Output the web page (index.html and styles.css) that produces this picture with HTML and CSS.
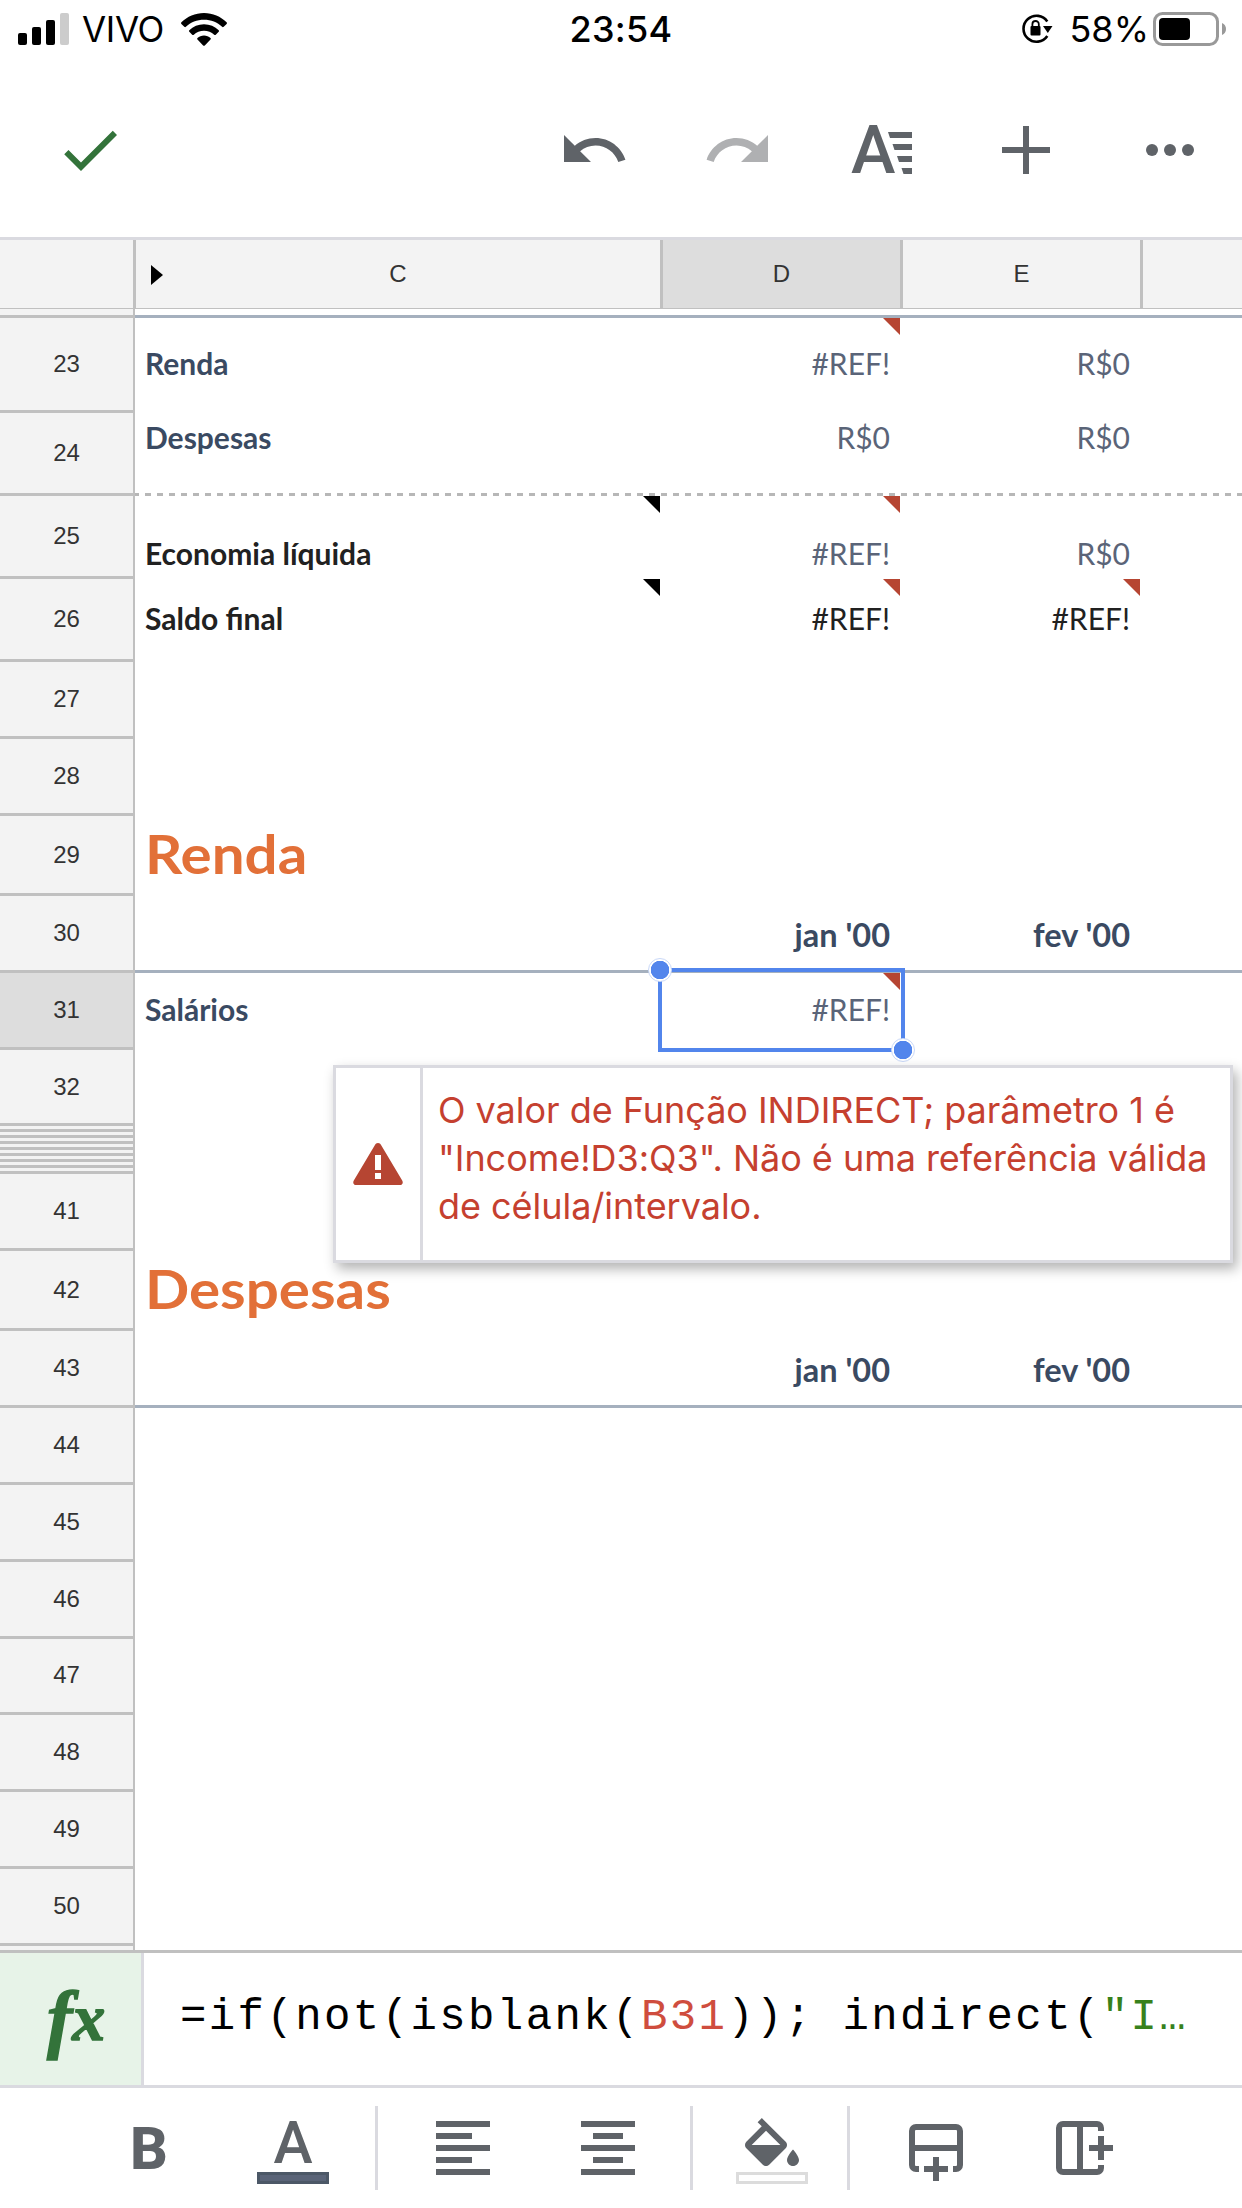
FILE: index.html
```html
<!DOCTYPE html>
<html lang="pt-BR">
<head>
  <meta charset="UTF-8">
  <meta name="viewport" content="width=device-width, initial-scale=1.0">
  <title>Planilha</title>
  <link rel="stylesheet" href="styles.css">
</head>
<body>
  <div class="app">
    <div class="status-bar">
      <div class="status-left">
        <svg class="signal" viewBox="0 0 51 32">
          <rect x="0" y="20" width="9" height="12" rx="2"/>
          <rect x="14" y="14" width="9" height="18" rx="2"/>
          <rect x="28" y="7" width="9" height="25" rx="2"/>
          <rect x="42" y="0" width="9" height="32" rx="2" fill="#ccc"/>
        </svg>
        <span class="carrier">VIVO</span>
        <svg class="wifi" viewBox="0 0 46 33">
          <path d="M23 0C14.200 0 6.200 3.600 .4 9.300c-.5.500-.5 1.100 0 1.600l2.900 2.900c.5.500 1.100.5 1.600 0C9.600 9.200 16 6.700 23 6.700s13.400 2.500 18.100 7.100c.5.500 1.100.5 1.600 0l2.900-2.900c.5-.5.5-1.100 0-1.600C39.800 3.600 31.800 0 23 0z"/>
          <path d="M23 11.300c-5.700 0-10.900 2.200-14.700 5.900-.5.500-.5 1.100 0 1.600l2.900 2.900c.5.500 1.100.5 1.600 0 2.700-2.500 6.300-3.900 10.200-3.900s7.500 1.400 10.200 3.900c.5.500 1.100.5 1.600 0l2.900-2.900c.5-.5.500-1.100 0-1.600-3.800-3.700-9-5.900-14.700-5.900z"/>
          <path d="M23 22.500c-2.500 0-4.800.9-6.500 2.400-.5.500-.5 1.100 0 1.500l5.600 6c.5.500 1.200.5 1.700 0l5.700-6c.5-.5.4-1.100 0-1.500-1.700-1.500-4-2.400-6.500-2.400z"/>
        </svg>
      </div>
      <span class="clock">23:54</span>
      <div class="status-right">
        <svg class="lock" viewBox="0 0 32 30">
          <path d="M26.300 7.500A13 13 0 1 0 26.300 22" fill="none" stroke="#000" stroke-width="2.600"/>
          <path d="M22 12h9.500l-4.700 7z"/>
          <rect x="9.500" y="12" width="10" height="9.500" rx="1"/>
          <path d="M11.400 12.500v-2.300a3.200 3.200 0 0 1 6.400 0v2.300" fill="none" stroke="#000" stroke-width="1.800"/>
        </svg>
        <span class="percent">58%</span>
        <svg class="battery" viewBox="0 0 74 34">
          <rect x="1.500" y="1.500" width="63" height="31" rx="8" fill="none" stroke="#999" stroke-width="3"/>
          <rect x="6" y="6" width="31" height="22" rx="4"/>
          <path d="M69 11c2.500 1 4 3.300 4 6s-1.500 5-4 6z" fill="#999"/>
        </svg>
      </div>
    </div>

    <div class="toolbar">
      <svg class="icon icon-done" viewBox="0 0 24 24"><path d="M9 16.170L4.830 12l-1.420 1.410L9 19 21 7l-1.410-1.410z"/></svg>
      <div class="toolbar-actions">
        <svg class="icon" viewBox="0 0 24 24"><path d="M12.500 8c-2.650 0-5.050.99-6.900 2.600L2 7v9h9l-3.620-3.620c1.390-1.160 3.160-1.880 5.120-1.880 3.540 0 6.550 2.310 7.600 5.500l2.370-.78C21.080 11.030 17.150 8 12.500 8z"/></svg>
        <svg class="icon icon-off" viewBox="0 0 24 24"><path d="M18.400 10.600C16.550 8.990 14.150 8 11.500 8c-4.650 0-8.580 3.030-9.960 7.220L3.900 16c1.050-3.190 4.050-5.500 7.600-5.500 1.950 0 3.730.72 5.120 1.880L13 16h9V7l-3.600 3.600z"/></svg>
        <div class="icon icon-format">
          <span>A</span>
          <svg viewBox="0 0 24 42"><path d="M0 0h24v6H2zM4.500 12H24v6H6.500zM9 24h15v6H11zM13.500 36H24v6H15.500z"/></svg>
        </div>
        <svg class="icon" viewBox="0 0 24 24"><path d="M11 4h2v7h7v2h-7v7h-2v-7H4v-2h7z"/></svg>
        <svg class="icon" viewBox="0 0 24 24"><circle cx="6" cy="12" r="2"/><circle cx="12" cy="12" r="2"/><circle cx="18" cy="12" r="2"/></svg>
      </div>
    </div>

    <div class="sheet">
      <div class="col-heads">
        <div class="col-head"></div>
        <div class="col-head col-c">C</div>
        <div class="col-head active">D</div>
        <div class="col-head">E</div>
        <div class="col-head"></div>
      </div>

      <div class="row cut line"><div class="row-head"></div></div>
      <div class="row h-95">
        <div class="row-head">23</div>
        <div class="cell label">Renda</div>
        <div class="cell num error">#REF!</div>
        <div class="cell num">R$0</div>
      </div>
      <div class="row h-83 top dashed">
        <div class="row-head">24</div>
        <div class="cell label">Despesas</div>
        <div class="cell num">R$0</div>
        <div class="cell num">R$0</div>
      </div>
      <div class="row h-83 bottom">
        <div class="row-head">25</div>
        <div class="cell label dark note">Economia líquida</div>
        <div class="cell num error">#REF!</div>
        <div class="cell num">R$0</div>
      </div>
      <div class="row h-83">
        <div class="row-head">26</div>
        <div class="cell label dark note">Saldo final</div>
        <div class="cell num dark error">#REF!</div>
        <div class="cell num dark error">#REF!</div>
      </div>
      <div class="row"><div class="row-head">27</div></div>
      <div class="row"><div class="row-head">28</div></div>
      <div class="row h-80">
        <div class="row-head">29</div>
        <div class="cell title"><span>Renda</span></div>
      </div>
      <div class="row line">
        <div class="row-head">30</div>
        <div class="cell"></div>
        <div class="cell month">jan '00</div>
        <div class="cell month">fev '00</div>
      </div>
      <div class="row">
        <div class="row-head active">31</div>
        <div class="cell label">Salários</div>
        <div class="cell num error">
          #REF!
          <div class="selection">
            <div class="handle handle-start"></div>
            <div class="handle handle-end"></div>
          </div>
        </div>
      </div>
      <div class="row h-76"><div class="row-head">32</div></div>
      <div class="row collapsed"><div class="row-head"></div></div>
      <div class="row"><div class="row-head">41</div></div>
      <div class="row h-80">
        <div class="row-head">42</div>
        <div class="cell title"><span>Despesas</span></div>
      </div>
      <div class="row line">
        <div class="row-head">43</div>
        <div class="cell"></div>
        <div class="cell month">jan '00</div>
        <div class="cell month">fev '00</div>
      </div>
      <div class="row blank"><div class="row-head">44</div></div>
      <div class="row blank"><div class="row-head">45</div></div>
      <div class="row blank"><div class="row-head">46</div></div>
      <div class="row blank"><div class="row-head">47</div></div>
      <div class="row blank"><div class="row-head">48</div></div>
      <div class="row blank"><div class="row-head">49</div></div>
      <div class="row blank"><div class="row-head">50</div></div>
      <div class="row rest"><div class="row-head"></div></div>

      <div class="tooltip">
        <div class="tooltip-icon">
          <svg viewBox="0 0 50 42">
            <path d="M25 0c1.500 0 2.400.8 3.200 2.200l21 35.300c1.300 2.300.2 4.500-2.200 4.500H3c-2.400 0-3.500-2.200-2.200-4.500l21-35.300C22.600.8 23.500 0 25 0z"/>
            <path d="M22 12h6v15h-6zM22 30h6v6h-6z" fill="#fff"/>
          </svg>
        </div>
        <div class="tooltip-text">
          <div>O valor de Função INDIRECT; parâmetro 1 é</div>
          <div>"Income!D3:Q3". Não é uma referência válida</div>
          <div>de célula/intervalo.</div>
        </div>
      </div>
    </div>

    <div class="formula-bar">
      <div class="fx"><span>f</span><span class="fx-x">x</span></div>
      <div class="formula">=if(not(isblank(<span class="ref">B31</span>)); indirect(<span class="str">"I…</span></div>
    </div>

    <div class="format-bar">
      <div class="tool tool-bold">B</div>
      <div class="tool tool-color"><span>A</span><div class="swatch"></div></div>
      <div class="divider"></div>
      <svg class="tool tool-left" viewBox="0 0 24 24"><path d="M3 3h18v2H3zM3 7h12v2H3zM3 11h18v2H3zM3 15h12v2H3zM3 19h18v2H3z"/></svg>
      <svg class="tool tool-center" viewBox="0 0 24 24"><path d="M3 3h18v2H3zM7 7h10v2H7zM3 11h18v2H3zM7 15h10v2H7zM3 19h18v2H3z"/></svg>
      <div class="divider"></div>
      <div class="tool tool-fill">
        <svg viewBox="0 0 24 17"><path d="M16.560 8.940L8.620 1 7.210 2.410l1.380 1.380-5.150 5.150c-.59.59-.59 1.540 0 2.120l5.500 5.500c.29.290.68.440 1.060.44s.77-.15 1.060-.44l5.500-5.500c.59-.58.59-1.530 0-2.120zM5.210 10L10 5.210 14.790 10H5.210zM19 11.500s-2 2.170-2 3.500c0 1.100.9 2 2 2s2-.9 2-2c0-1.330-2-3.500-2-3.500z"/></svg>
        <div class="swatch no-fill"></div>
      </div>
      <div class="divider"></div>
      <svg class="tool tool-row" viewBox="0 0 72 72">
        <path d="M19 57h-3a4 4 0 0 1-4-4V19a4 4 0 0 1 4-4h40a4 4 0 0 1 4 4v34a4 4 0 0 1-4 4h-3M12 36h48" fill="none" stroke="#5f6368" stroke-width="6"/>
        <path d="M33 45h6v9h9v6h-9v9h-6v-9h-9v-6h9z"/>
      </svg>
      <svg class="tool tool-col" viewBox="0 0 72 72">
        <path d="M54 19v-3a4 4 0 0 0-4-4H16a4 4 0 0 0-4 4v40a4 4 0 0 0 4 4h34a4 4 0 0 0 4-4v-3M33 12v48" fill="none" stroke="#5f6368" stroke-width="6"/>
        <path d="M51 24h6v9h9v6h-9v9h-6v-9h-9v-6h9z"/>
      </svg>
    </div>
  </div>
</body>
</html>
```
FILE: styles.css
```css
* {
  margin: 0;
  padding: 0;
  box-sizing: border-box;
}

body {
  font-family: Inter, 'Liberation Sans', sans-serif;
  background: #fff;
}

.app {
  width: 1242px;
  height: 2208px;
  display: flex;
  flex-direction: column;
  overflow: hidden;
}

svg {
  display: block;
  flex: none;
}

/* status bar */
.status-bar {
  height: 60px;
  display: grid;
  grid-template-columns: 1fr auto 1fr;
  padding: 0 15px 0 18px;
  font-size: 35px;
  line-height: 59px;
  color: #000;
}

.status-left,
.status-right {
  display: flex;
}

.status-right {
  justify-content: flex-end;
}

.signal {
  width: 51px;
  height: 32px;
  margin: 13px 13px 0 0;
}

.carrier {
  width: 99px;
  letter-spacing: -0.3px;
}

.wifi {
  width: 46px;
  height: 33px;
  margin-top: 13px;
}

.clock {
  font-size: 36px;
  font-weight: 500;
  letter-spacing: 0.3px;
  margin-left: -3px;
}

.lock {
  width: 32px;
  height: 30px;
  margin-top: 14px;
}

.percent {
  font-size: 36px;
  margin: 0 4px 0 16px;
}

.battery {
  width: 74px;
  height: 34px;
  margin-top: 12px;
}

/* top toolbar */
.toolbar {
  height: 180px;
  display: flex;
  justify-content: space-between;
  align-items: center;
  padding: 3px 36px 0 54px;
  border-bottom: 3px solid #dadae0;
}

.toolbar-actions {
  display: flex;
  gap: 72px;
}

.icon {
  width: 72px;
  height: 72px;
  fill: #5f6368;
}

.icon-done {
  fill: #33733a;
}

.icon-off {
  fill: #afb0b2;
}

.icon-format {
  display: flex;
  padding: 12px 0 0 6px;
  font: 500 67px/49px Roboto, sans-serif;
  color: #5f6368;
}

.icon-format span {
  width: 36px;
  margin-left: -1px;
}

.icon-format svg {
  width: 24px;
  height: 42px;
  margin: 6px 0 0 1px;
}

/* sheet */
.sheet {
  position: relative;
  height: 1710px;
  overflow: hidden;
}

.col-heads {
  display: grid;
  grid-template-columns: 136px 527px 240px 240px 1fr;
  height: 69px;
  border-bottom: 1px solid #c0c0c0;
}

.col-head {
  background: #f3f3f3;
  border-right: 3px solid #c0c0c0;
  font: 24px/67px 'Liberation Sans', sans-serif;
  color: #333;
  text-align: center;
}

.col-head:last-child {
  border-right: none;
}

.col-c {
  position: relative;
}

/* hidden columns arrow */
.col-c::before {
  content: '';
  position: absolute;
  left: 15px;
  top: 25px;
  border-left: 12px solid #000;
  border-top: 10.5px solid transparent;
  border-bottom: 10.5px solid transparent;
}

.row {
  height: 77px;
  display: grid;
  grid-template-columns: 135px 525px 240px 240px;
  background: no-repeat bottom left / 100% 3px;
}

.h-95 { height: 95px; }
.h-83 { height: 83px; }
.h-80 { height: 80px; }
.h-76 { height: 76px; }
.cut { height: 9px; }
.collapsed { height: 48px; }
.blank { height: 76.857px; }
.rest { height: 4px; }

.line {
  background-image: linear-gradient(#a5b0be, #a5b0be);
}

.dashed {
  background-image: repeating-linear-gradient(90deg, transparent 0 1px, #b7b7b7 1px 7px, transparent 7px 12px);
}

.row-head {
  display: flex;
  align-items: center;
  justify-content: center;
  background: #f3f3f3;
  border-right: 2px solid #c0c0c0;
  border-bottom: 3px solid #c0c0c0;
  font: 24px/1 'Liberation Sans', sans-serif;
  color: #333;
}

.active {
  background: #ddd;
}

.collapsed .row-head {
  border-bottom: none;
  background: repeating-linear-gradient(#f3f3f3 0 3px, #c0c0c0 3px 6px);
}

.rest .row-head {
  border-bottom: none;
}

.cell {
  position: relative;
  display: flex;
  align-items: center;
  padding: 0 10px 6px;
  font: 30px/36px Lato, sans-serif;
  color: #5a6478;
}

.top .cell {
  align-items: flex-start;
  padding-top: 6px;
}

.bottom .cell {
  align-items: flex-end;
  padding-bottom: 8px;
}

.label {
  font-weight: 700;
  color: #3a4a62;
}

.dark {
  color: #212121;
}

.num,
.month {
  justify-content: flex-end;
}

.month {
  padding-bottom: 0;
  font-size: 32.5px;
  font-weight: 700;
  color: #3a4a62;
}

.title {
  padding-bottom: 4px;
  font-size: 53px;
  font-weight: 700;
  color: #e27038;
}

.title span {
  transform: scaleX(1.1);
  transform-origin: left;
}

.error::before,
.note::before {
  content: '';
  position: absolute;
  top: 0;
  right: 0;
  width: 17px;
  height: 17px;
  background: #b64532;
  clip-path: polygon(0 0, 100% 0, 100% 100%);
}

.note::before {
  background: #000;
}

.selection {
  position: absolute;
  top: -5px;
  left: -2px;
  right: -5px;
  bottom: -2px;
  border: 4px solid #5285ec;
}

.handle {
  position: absolute;
  width: 24px;
  height: 24px;
  border-radius: 50%;
  border: 1px solid #c9d8f8;
  background: radial-gradient(#5285ec 9px, #fff 9.5px);
}

.handle-start {
  top: -14px;
  left: -14px;
}

.handle-end {
  right: -14px;
  bottom: -14px;
}

/* error tooltip */
.tooltip {
  position: absolute;
  left: 333px;
  top: 825px;
  width: 900px;
  height: 198px;
  display: flex;
  background: #fff;
  border: 3px solid #dadae0;
  box-shadow: 4px 6px 12px rgba(0, 0, 0, 0.3);
}

.tooltip-icon {
  width: 87px;
  padding: 75px 0 0 17px;
  border-right: 3px solid #dadae0;
}

.tooltip-icon svg {
  width: 50px;
  height: 42px;
  fill: #b64532;
}

.tooltip-text {
  padding: 18px 0 0 15px;
  font-size: 36px;
  line-height: 48px;
  letter-spacing: -0.03px;
  color: #c5402f;
  white-space: nowrap;
}

/* formula bar */
.formula-bar {
  height: 138px;
  display: flex;
  border-top: 3px solid #c0c0c0;
  border-bottom: 3px solid #dadae0;
}

.fx {
  width: 144px;
  display: flex;
  padding-left: 47px;
  background: #e7f3e8;
  border-right: 3px solid #dadae0;
  font: italic 700 76px/130px 'Liberation Serif', serif;
  color: #33733a;
  -webkit-text-stroke: 1.5px #33733a;
}

.fx-x {
  font-size: 66px;
  margin-left: 0;
}

.formula {
  padding-left: 36px;
  font: 44px/129px 'Liberation Mono', monospace;
  letter-spacing: 2.4px;
  color: #000;
  white-space: pre;
}

.ref {
  color: #cf4d3e;
}

.str {
  color: #37811c;
}

/* bottom format bar */
.format-bar {
  height: 120px;
  display: flex;
  padding-top: 18px;
  font-family: Roboto, sans-serif;
  color: #5f6368;
}

.tool {
  width: 72px;
  height: 84px;
  flex: none;
  fill: #5f6368;
}

.tool-bold {
  margin-left: 113px;
  text-align: center;
  font-size: 59px;
  font-weight: 800;
  line-height: 85px;
}

.tool-color {
  margin: 0 46px 0 72px;
  text-align: center;
  font-size: 59px;
  font-weight: 500;
}

.tool-color span {
  display: block;
  height: 66px;
  line-height: 73px;
}

.tool-left,
.tool-center,
.tool-row,
.tool-col {
  height: 72px;
  margin-top: 6px;
}

.tool-left {
  margin-left: 49px;
}

.tool-center {
  margin-left: 73px;
  margin-right: 46px;
}

.tool-row {
  margin-left: 50px;
}

.tool-col {
  margin-left: 75px;
}

.swatch {
  width: 72px;
  height: 12px;
  background: #5a6478;
  border: 3px solid #4c5867;
}

.no-fill {
  background: #fff;
  border-color: #dcdcdc;
}

.divider {
  width: 3px;
  height: 84px;
  background: #dadae0;
}

.tool-fill {
  margin: 0 39px 0 43px;
}

.tool-fill svg {
  width: 72px;
  height: 51px;
  margin: 9px 0 6px;
}
```
